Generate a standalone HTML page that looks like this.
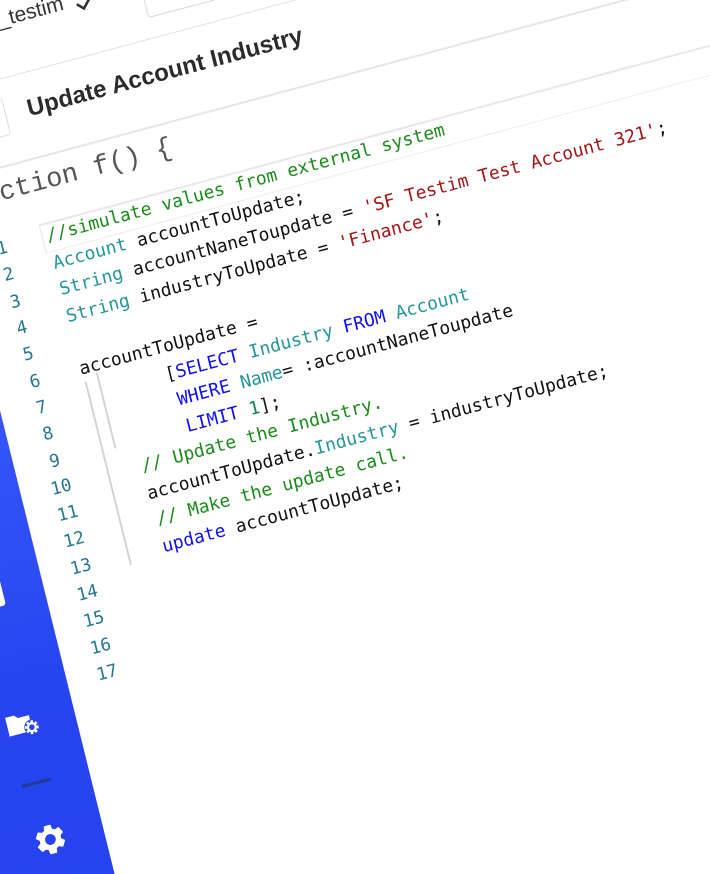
<!DOCTYPE html>
<html><head><meta charset="utf-8"><style>
html,body{margin:0;padding:0;width:710px;height:874px;overflow:hidden;background:#fff;}
#clip{position:fixed;left:0;top:0;width:710px;height:874px;overflow:hidden;background:#fff;}
#w{position:absolute;left:0;top:0;width:10px;height:10px;transform-origin:0 0;transform:matrix(0.966,-0.259,0.240,0.971,0,2);}
#w div{position:absolute;}
.ln{font-family:"DejaVu Sans Mono",monospace;font-size:17.5px;color:#237893;width:30px;text-align:center;left:-72px;height:27px;line-height:27px;}
.cl{font-family:"DejaVu Sans Mono",monospace;font-size:18px;color:#111;white-space:pre;height:27px;line-height:27px;}
.c{color:#1a8c1a}.t{color:#23969a}.k{color:#1010f0}.s{color:#a31515}.n{color:#098658}
</style></head><body>
<div id="clip">
<div id="w">
  <div style="left:-400px;top:6px;width:461px;text-align:right;font:21px 'Liberation Sans',sans-serif;color:#333;line-height:24px;">salesforce_testim</div>
  <div style="left:72px;top:12px;"><svg width="22" height="20"><polyline points="2,10 8,16 20,3" fill="none" stroke="#333" stroke-width="2.6"/></svg></div>
  <div style="left:140px;top:-60px;width:700px;height:112px;border:1px solid #d5d9e2;border-radius:4px;"></div>
  <div style="left:-400px;top:74px;width:1400px;height:1px;background:#dde1e8;"></div>
  <div style="left:-80px;top:93px;width:57px;height:36px;border:1px solid #dcdcdc;border-radius:3px;"></div>
  <div style="left:1px;top:97px;font:bold 24px 'Liberation Sans',sans-serif;color:#2b2b2b;line-height:28px;white-space:nowrap;">Update Account Industry</div>
  <div style="left:-400px;top:159px;width:1400px;height:2px;background:#e6e6e6;"></div>
  <div style="left:-95px;top:170px;font:27px 'Liberation Mono',monospace;color:#555;line-height:32px;white-space:pre;">function f() {</div>
  <div style="left:-16px;top:225px;width:1000px;height:27px;border-top:2px solid #e8e8e8;border-bottom:1px solid #ececec;border-left:1px solid #e4e4e4;"></div>
  <div style="left:-600px;top:393px;width:502px;height:700px;background:linear-gradient(180deg,#3556fb 0%,#2745ef 40%,#2340ea 100%);"></div>
  <div style="left:-300px;top:520px;width:161px;height:64px;background:#fff;border-radius:3px;"></div>
  <div style="left:-168px;top:688px;"><svg width="34" height="30" viewBox="0 0 30 26"><path d="M1 4h8l3 3h10v4a7 7 0 0 0-6 10H1z" fill="#fff"/><circle cx="22" cy="18" r="4.5" fill="none" stroke="#fff" stroke-width="3.2" stroke-dasharray="2 1.5"/><circle cx="22" cy="18" r="3.5" fill="none" stroke="#fff" stroke-width="2"/></svg></div>
  <div style="left:-167px;top:762px;width:30px;height:3px;background:#23379a;"></div>
  <div style="left:-170px;top:804px;"><svg width="36" height="36" viewBox="0 0 24 24"><path fill="#fff" d="M19.14 12.94c.04-.3.06-.61.06-.94 0-.32-.02-.64-.07-.94l2.03-1.58a.49.49 0 0 0 .12-.61l-1.92-3.32a.49.49 0 0 0-.59-.22l-2.39.96c-.5-.38-1.03-.7-1.62-.94l-.36-2.54a.48.48 0 0 0-.48-.41h-3.84c-.24 0-.43.17-.47.41l-.36 2.54c-.59.24-1.13.57-1.62.94l-2.39-.96a.49.49 0 0 0-.59.22L2.74 8.87c-.12.21-.08.47.12.61l2.03 1.58c-.05.3-.09.63-.09.94s.02.64.07.94l-2.03 1.58a.49.49 0 0 0-.12.61l1.92 3.32c.12.22.37.29.59.22l2.39-.96c.5.38 1.03.7 1.62.94l.36 2.54c.05.24.24.41.48.41h3.84c.24 0 .44-.17.47-.41l.36-2.54c.59-.24 1.13-.56 1.62-.94l2.39.96c.22.08.47 0 .59-.22l1.92-3.32c.12-.22.07-.47-.12-.61l-2.01-1.58zM12 15.6A3.6 3.6 0 1 1 12 8.4a3.6 3.6 0 0 1 0 7.2z"/></svg></div>
  <div style="left:-9px;top:389px;width:2px;height:189px;background:#d4d4d4;"></div>
  <div style="left:4px;top:383px;width:2px;height:78px;background:#d4d4d4;"></div>
  <div class="ln" style="top:226px">1</div>
  <div class="ln" style="top:253px">2</div>
  <div class="ln" style="top:281px">3</div>
  <div class="ln" style="top:308px">4</div>
  <div class="ln" style="top:335px">5</div>
  <div class="ln" style="top:363px">6</div>
  <div class="ln" style="top:390px">7</div>
  <div class="ln" style="top:417px">8</div>
  <div class="ln" style="top:445px">9</div>
  <div class="ln" style="top:472px">10</div>
  <div class="ln" style="top:499px">11</div>
  <div class="ln" style="top:526px">12</div>
  <div class="ln" style="top:554px">13</div>
  <div class="ln" style="top:581px">14</div>
  <div class="ln" style="top:608px">15</div>
  <div class="ln" style="top:636px">16</div>
  <div class="ln" style="top:663px">17</div>
  <div class="cl" style="left:-11px;top:225px"><span class="c">//simulate values from external system</span></div>
  <div class="cl" style="left:-11px;top:253px"><span class="t">Account</span> accountToUpdate;</div>
  <div class="cl" style="left:-11px;top:280px"><span class="t">String</span> accountNaneToupdate = <span class="s">'SF Testim Test Account 321'</span>;</div>
  <div class="cl" style="left:-11px;top:308px"><span class="t">String</span> industryToUpdate = <span class="s">'Finance'</span>;</div>
  <div class="cl" style="left:-11px;top:362px">accountToUpdate =</div>
  <div class="cl" style="left:71px;top:390px">[<span class="k">SELECT</span> <span class="t">Industry</span> <span class="k">FROM</span> <span class="t">Account</span></div>
  <div class="cl" style="left:77px;top:417px"><span class="k">WHERE</span> <span class="t">Name</span>= :accountNaneToupdate</div>
  <div class="cl" style="left:79px;top:445px"><span class="k">LIMIT</span> <span class="n">1</span>];</div>
  <div class="cl" style="left:26px;top:472px"><span class="c">// Update the Industry.</span></div>
  <div class="cl" style="left:25px;top:500px">accountToUpdate.<span class="t">Industry</span> = industryToUpdate;</div>
  <div class="cl" style="left:28px;top:527px"><span class="c">// Make the update call.</span></div>
  <div class="cl" style="left:27px;top:555px"><span class="k">update</span> accountToUpdate;</div>
</div>
</div>
</body></html>
